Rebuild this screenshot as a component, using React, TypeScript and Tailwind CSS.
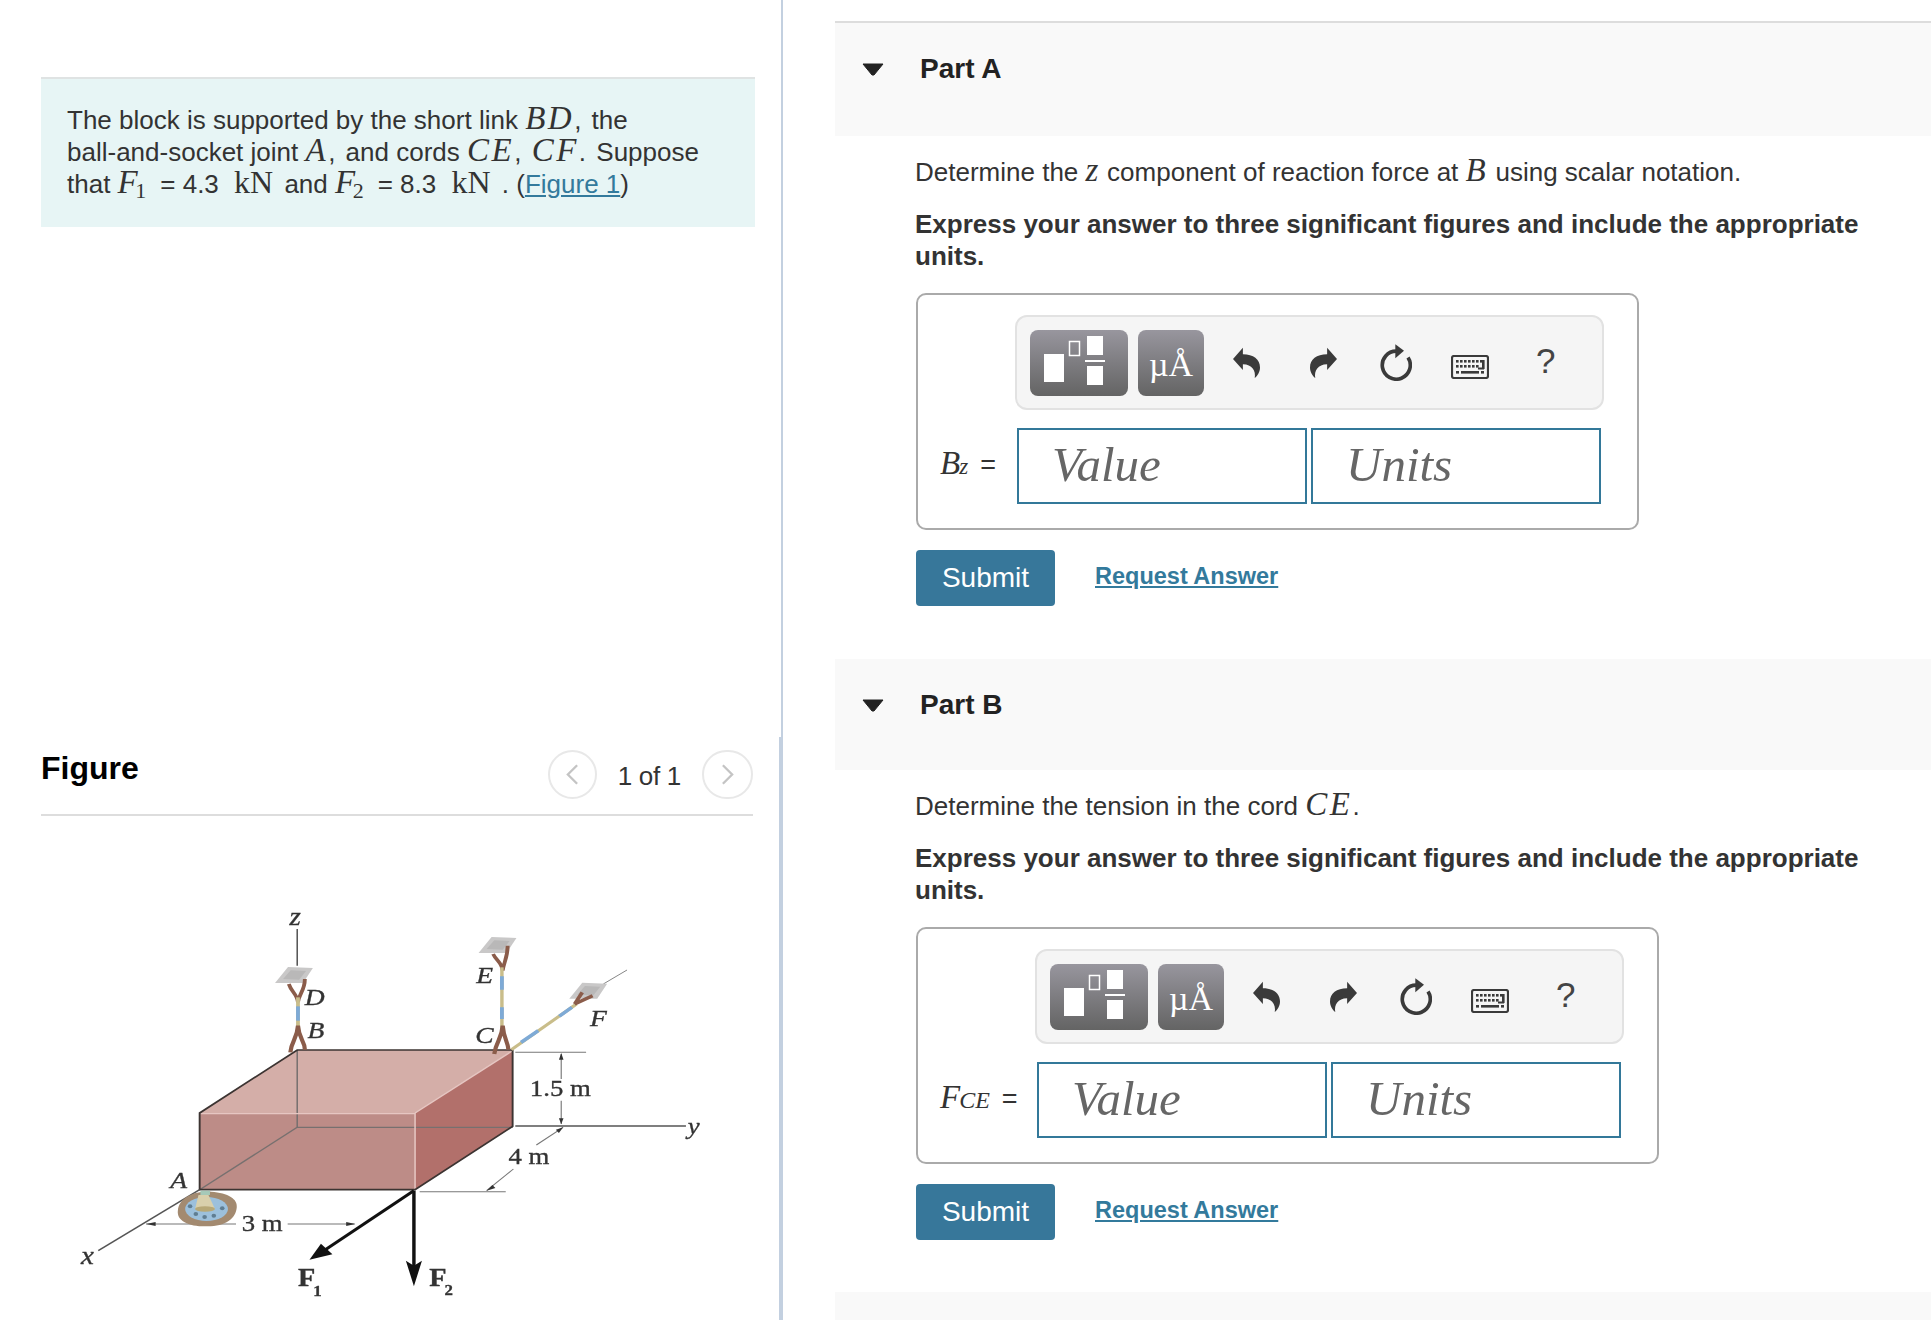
import React from 'react';

const M = ({ children }: { children: React.ReactNode }) => (
    <span className="font-['Liberation_Serif',serif] italic text-[33px] leading-[0] tracking-[2.5px]">{children}</span>
);

const R = ({ children }: { children: React.ReactNode }) => (
    <span className="mr-[4px] font-['Liberation_Serif',serif] text-[32px] leading-[0]">{children}</span>
);

const Sub = ({ children }: { children: React.ReactNode }) => (
    <span className="font-['Liberation_Serif',serif] text-[22px] leading-[0] align-[-5px] -ml-[5px] mr-[14px]">{children}</span>
);

const Undo = ({ flip }: { flip?: boolean }) => (
    <svg viewBox="0 0 82 94" className={flip ? 'w-[27px] h-[31px] -scale-x-100' : 'w-[27px] h-[31px]'}>
        <path d="M0 36 L30 2 V22 C62 22 82 38 82 62 C82 76 74 88 66 94 C70 72 58 52 30 52 V70 Z" fill="#3a3a3a" />
    </svg>
);

const Reload = () => (
    <svg viewBox="0 0 96 110" className="w-[32px] h-[37px]">
        <path d="M50 21 A42 42 0 1 0 84 40" fill="none" stroke="#3a3a3a" strokeWidth="11" />
        <path d="M46 0 L72 20 L46 42 Z" fill="#3a3a3a" />
    </svg>
);

const Keyboard = () => (
    <svg viewBox="0 0 38 24" className="w-[38px] h-[24px]">
        <rect x="1" y="1" width="36" height="22" rx="2" fill="none" stroke="#3a3a3a" strokeWidth="2.2" />
        {[5, 9, 13, 17, 21, 25, 29].map((x) => (
            <rect key={x} x={x} y="5" width="2.6" height="2.6" fill="#3a3a3a" />
        ))}
        {[5, 9, 13, 17, 21, 25].map((x) => (
            <rect key={x} x={x} y="10" width="2.6" height="2.6" fill="#3a3a3a" />
        ))}
        <rect x="31" y="5" width="2.6" height="9" fill="#3a3a3a" />
        <rect x="27" y="12.5" width="6" height="2" fill="#3a3a3a" />
        <rect x="5" y="16" width="3" height="2.6" fill="#3a3a3a" />
        <rect x="10" y="16" width="18" height="2.6" fill="#3a3a3a" />
        <rect x="30" y="16" width="3" height="2.6" fill="#3a3a3a" />
    </svg>
);

const TemplateIcon = () => (
    <svg viewBox="0 0 98 66" className="w-[98px] h-[66px]">
        <rect x="14" y="24" width="20" height="28" fill="#fff" />
        <rect x="39.5" y="11.5" width="10" height="14" fill="none" stroke="#fff" strokeWidth="1.5" />
        <rect x="57" y="6" width="16" height="19" fill="#fff" />
        <rect x="55" y="30" width="20" height="2" fill="#fff" />
        <rect x="57" y="36" width="16" height="19" fill="#fff" />
    </svg>
);

const Toolbar = () => (
    <div className="flex items-center w-[589px] h-[95px] pl-[13px] bg-[#f5f5f5] border-2 border-[#e2e2e2] rounded-[12px]">
        <div className="w-[98px] h-[66px] rounded-lg bg-linear-to-b from-[#98969e] to-[#646464] shrink-0">
            <TemplateIcon />
        </div>
        <div className="w-[66px] h-[66px] ml-[10px] rounded-lg bg-linear-to-b from-[#98969e] to-[#646464] shrink-0 flex items-end justify-center pb-[14px] font-['Liberation_Serif',serif] text-[34px] leading-none text-white">
            µÅ
        </div>
        <div className="ml-[29px]"><Undo /></div>
        <div className="ml-[50px]"><Undo flip /></div>
        <div className="ml-[43px]"><Reload /></div>
        <div className="ml-[39px] mt-[8px]"><Keyboard /></div>
        <div className="ml-[47px] text-[35px] leading-none text-[#444] -mt-[4px]">?</div>
    </div>
);

const AnswerBox = ({ label, labelWidth }: { label: React.ReactNode; labelWidth: string }) => (
    <div className="w-fit h-[237px] pt-[20px] pr-[33px] border-2 border-[#aaa] rounded-[10px]">
        <div className="flex">
            <div className={labelWidth}></div>
            <Toolbar />
        </div>
        <div className="flex items-center mt-[18px]">
            <div className={`${labelWidth} pl-[22px] pb-[4px] font-['Liberation_Serif',serif] text-[33px] whitespace-nowrap text-[#333]`}>
                {label}
            </div>
            <input
                placeholder="Value"
                className="w-[290px] h-[76px] ml-[2px] pl-[33px] pb-[4px] border-2 border-[#337899] font-['Liberation_Serif',serif] italic text-[49px] placeholder:text-[#666] outline-none"
            />
            <input
                placeholder="Units"
                className="w-[290px] h-[76px] ml-[4px] pl-[33px] pb-[4px] border-2 border-[#337899] font-['Liberation_Serif',serif] italic text-[49px] placeholder:text-[#666] outline-none"
            />
        </div>
    </div>
);

const Part = ({ name, first, children }: { name: string; first?: boolean; children: React.ReactNode }) => (
    <div>
        <div className={first ? 'flex items-start h-[115px] pt-[29px] bg-[#f9f9f9] border-t-2 border-[#ddd]' : 'flex items-start h-[111px] pt-[29px] bg-[#f9f9f9]'}>
            <svg viewBox="0 0 22 13" className="w-[22px] h-[13px] ml-[27px] mt-[11px]">
                <path d="M1 1 H21 L12 12 H10 Z" fill="#222" stroke="#222" strokeWidth="1" strokeLinejoin="round" />
            </svg>
            <div className="ml-[36px] text-[28px] leading-[34px] font-bold text-[#222]">{name}</div>
        </div>
        <div className="pl-[80px]">
            <p className="mt-[20px] text-[26px] leading-[32px] text-[#333]">{children}</p>
            <p className="mt-[20px] w-[960px] text-[26px] leading-[32px] font-bold text-[#333]">
                Express your answer to three significant figures and include the appropriate units.
            </p>
        </div>
    </div>
);

const Actions = () => (
    <div className="flex mt-[20px]">
        <button className="w-[139px] h-[56px] bg-[#37779a] rounded text-white text-[28px]">Submit</button>
        <a className="ml-[40px] mt-[10px] text-[23.5px] leading-[32px] font-bold text-[#337a9c] underline">Request Answer</a>
    </div>
);

const Patch = ({ x, y }: { x: number; y: number }) => (
    <g transform={`translate(${x} ${y})`}>
        <polygon points="-51,24 -17,-24 48,-21 22,24" fill="#c9c8c8" />
        <polygon points="-30,12 -10,-14 30,-12 12,14" fill="#b9b8b8" />
    </g>
);

const Diagram = () => (
    <svg viewBox="0 0 1725 1290" preserveAspectRatio="none" className="w-[660px] h-[430px] blur-[0.5px]">
        {/* block */}
        <polygon points="365,672 620,483 1183,483 928,672" fill="#d4aea8" />
        <polygon points="365,672 928,672 928,902 365,902" fill="#bd8c87" />
        <polygon points="928,672 1183,483 1183,712 928,902" fill="#b2706b" />
        <g stroke="#77706f" strokeWidth="4" fill="none">
            <path d="M620 483 V715 H1183" />
            <path d="M620 715 L365 902" />
        </g>
        <g stroke="#e6c6c2" strokeWidth="4" fill="none">
            <path d="M365 674 H928 V900" />
            <path d="M928 672 L1183 485" />
        </g>
        <path d="M365 902 V672 L620 483 H1183 V712 L928 902 Z" fill="none" stroke="#3c3432" strokeWidth="5" />
        {/* axes */}
        <g stroke="#555" strokeWidth="4" fill="none">
            <path d="M620 120 V230" />
            <path d="M1190 711 H1636" />
            <path d="M365 902 L100 1085" />
            <path d="M1420 285 L1482 243" strokeWidth="2" />
        </g>
        {/* dimensions */}
        <g stroke="#777" strokeWidth="3" fill="none">
            <path d="M1190 490 H1375" />
            <path d="M1310 495 V570" />
            <path d="M1310 635 V705" />
            <path d="M1315 715 L1245 768" />
            <path d="M1185 840 L1115 905" />
            <path d="M940 908 H1165" />
            <path d="M225 1005 H460" />
            <path d="M595 1005 H770" />
        </g>
        <g fill="#333">
            <polygon points="1310,492 1304,512 1316,512" />
            <polygon points="1310,706 1304,688 1316,688" />
            <polygon points="225,1005 250,999 250,1011" />
            <polygon points="772,1005 748,999 748,1011" />
            <polygon points="1115,905 1130,888 1138,897" />
            <polygon points="1315,715 1296,722 1304,732" />
        </g>
        {/* ceiling patches */}
        <Patch x={613} y={258} />
        <Patch x={1145} y={168} />
        <Patch x={1382} y={305} />
        {/* link BD */}
        <path d="M598 285 C605 310 620 315 622 340 C624 315 640 305 640 270" fill="none" stroke="#8b5c4a" strokeWidth="10" />
        <path d="M622 325 V425" stroke="#c9bd8a" strokeWidth="10" />
        <path d="M622 352 V395" stroke="#7eaad6" strokeWidth="10" />
        <path d="M602 490 C605 455 620 450 622 410 C624 450 640 455 640 482" fill="none" stroke="#8b5c4a" strokeWidth="11" />
        {/* cord CE */}
        <path d="M1132 195 C1140 215 1155 220 1157 245 C1160 220 1170 205 1170 170" fill="none" stroke="#8b5c4a" strokeWidth="10" />
        <path d="M1155 235 V425" stroke="#c9bd8a" strokeWidth="9" />
        <path d="M1155 262 V302 M1155 355 V390" stroke="#7eaad6" strokeWidth="10" />
        <path d="M1135 495 C1140 455 1155 450 1157 410 C1160 450 1170 455 1172 482" fill="none" stroke="#8b5c4a" strokeWidth="11" />
        {/* cord CF */}
        <path d="M1180 482 L1350 345" stroke="#c9bd8a" strokeWidth="9" />
        <path d="M1205 460 L1250 425 M1305 382 L1338 355" stroke="#7eaad6" strokeWidth="10" />
        <path d="M1345 345 L1365 310 M1345 345 L1392 320" stroke="#8b5c4a" strokeWidth="10" />
        {/* ball-and-socket */}
        <path d="M308 965 C312 925 350 906 395 908 C440 912 465 930 462 955 C460 990 430 1014 380 1012 C335 1012 305 995 308 965 Z" fill="#a38a70" />
        <ellipse cx="383" cy="960" rx="56" ry="36" fill="#9cc0dc" />
        {[340, 355, 378, 402, 424].map((x, i) => (
            <circle key={x} cx={x} cy={[952, 975, 984, 980, 958][i]} r="6" fill="#5f7d92" />
        ))}
        <polygon points="362,918 388,918 405,960 353,960" fill="#d9d0ac" />
        <ellipse cx="379" cy="960" rx="26" ry="8" fill="#b7a877" />
        <rect x="367" y="905" width="25" height="13" fill="#a6c9b8" />
        {/* forces */}
        <path d="M925 905 L690 1085" stroke="#111" strokeWidth="9" />
        <polygon points="652,1112 682,1064 712,1096" fill="#111" />
        <path d="M925 905 V1140" stroke="#111" strokeWidth="9" />
        <polygon points="925,1192 904,1115 925,1130 946,1115" fill="#111" />
        {/* labels */}
        <g fontFamily="'Liberation Serif', serif" fontSize="72" fill="#333" stroke="#333" strokeWidth="1">
            <g fontStyle="italic">
                <text x="600" y="108" fontSize="76">z</text>
                <text x="640" y="347">D</text>
                <text x="647" y="447">B</text>
                <text x="1088" y="282">E</text>
                <text x="1085" y="462">C</text>
                <text x="1385" y="410">F</text>
                <text x="288" y="898">A</text>
                <text x="55" y="1125" fontSize="76">x</text>
                <text x="1641" y="735" fontSize="70">y</text>
            </g>
            <text x="1228" y="622" fontSize="70">1.5 m</text>
            <text x="1172" y="825" fontSize="70">4 m</text>
            <text x="475" y="1025" fontSize="70">3 m</text>
            <text x="622" y="1192" fontWeight="bold" fontSize="74">F</text>
            <text x="662" y="1222" fontWeight="bold" fontSize="44">1</text>
            <text x="965" y="1192" fontWeight="bold" fontSize="74">F</text>
            <text x="1005" y="1218" fontWeight="bold" fontSize="44">2</text>
        </g>
    </svg>
);

const App: React.FC = () => {
    return (
        <div className="flex w-[1931px] h-[1320px] overflow-hidden bg-white font-['Liberation_Sans',sans-serif] text-[#333]">
            {/* left column */}
            <div className="w-[778px] shrink-0 pt-[77px]">
                <div className="w-[714px] h-[150px] ml-[41px] pt-[25px] pl-[26px] bg-[#e7f5f5] border-t-2 border-[#dfe3e3] text-[26px] leading-[32px] whitespace-nowrap">
                    The block is supported by the short link <M>BD</M><span className="mr-[3px]">,</span> the<br />
                    ball-and-socket joint <M>A</M><span className="mr-[3px]">,</span> and cords <M>CE</M><span className="mr-[3px]">,</span> <M>CF</M><span className="mr-[3px]">.</span> Suppose<br />
                    that <M>F</M><Sub>1</Sub>= 4.3 <R>&nbsp;kN</R> and <M>F</M><Sub>2</Sub>= 8.3 <R>&nbsp;kN</R> . (<a className="text-[#337a9c] underline">Figure 1</a>)
                </div>
                <div className="flex items-start w-[712px] h-[65px] mt-[522px] ml-[41px]">
                    <div className="text-[32px] leading-[40px] font-bold text-black -mt-[1px]">Figure</div>
                    <div className="flex items-center justify-center w-[49px] h-[49px] mt-[1px] ml-auto rounded-full border-2 border-[#e8e8e8]">
                        <svg viewBox="0 0 14 24" className="w-[13px] h-[23px]"><path d="M12 2 L2 12 L12 22" fill="none" stroke="#c4c4c4" strokeWidth="2.5" /></svg>
                    </div>
                    <div className="ml-[21px] mt-[11px] text-[26px] leading-[32px] tracking-[-0.3px] text-[#333]">1 of 1</div>
                    <div className="flex items-center justify-center w-[51px] h-[49px] mt-[1px] ml-[21px] rounded-full border-2 border-[#e8e8e8]">
                        <svg viewBox="0 0 14 24" className="w-[13px] h-[23px]"><path d="M2 2 L12 12 L2 22" fill="none" stroke="#c4c4c4" strokeWidth="2.5" /></svg>
                    </div>
                </div>
                <div className="w-[712px] h-[2px] ml-[41px] bg-[#ddd]"></div>
                <div className="mt-[73px] ml-[60px]">
                    <Diagram />
                </div>
            </div>

            {/* divider */}
            <div className="flex flex-col items-end w-[5px] shrink-0">
                <div className="w-[2px] h-[737px] bg-[#c3d0e0]"></div>
                <div className="w-[4px] flex-1 bg-[#c3d0e0]"></div>
            </div>

            {/* right column */}
            <div className="flex-1 ml-[52px] pt-[21px]">
                <Part name="Part A" first>
                    Determine the <M>z</M> <span className="-ml-[1px]">component</span> of reaction force at <M>B</M> using scalar notation.
                </Part>
                <div className="ml-[81px] mt-[21px]">
                    <AnswerBox label={<><i>B</i><i className="text-[23px] -ml-[1px] mr-[12px]">z</i><span className="font-['Liberation_Sans',sans-serif] text-[27px]">=</span></>} labelWidth="w-[97px]" />
                    <Actions />
                </div>
                <div className="mt-[53px]">
                    <Part name="Part B">
                        Determine the tension in the cord <M>CE</M>.
                    </Part>
                </div>
                <div className="ml-[81px] mt-[21px]">
                    <AnswerBox label={<><i>F</i><i className="text-[24px] -ml-[1px] mr-[12px]">CE</i><span className="font-['Liberation_Sans',sans-serif] text-[27px]">=</span></>} labelWidth="w-[117px]" />
                    <Actions />
                </div>
                <div className="h-[40px] mt-[52px] bg-[#f9f9f9]"></div>
            </div>
        </div>
    );
};

export default App;
